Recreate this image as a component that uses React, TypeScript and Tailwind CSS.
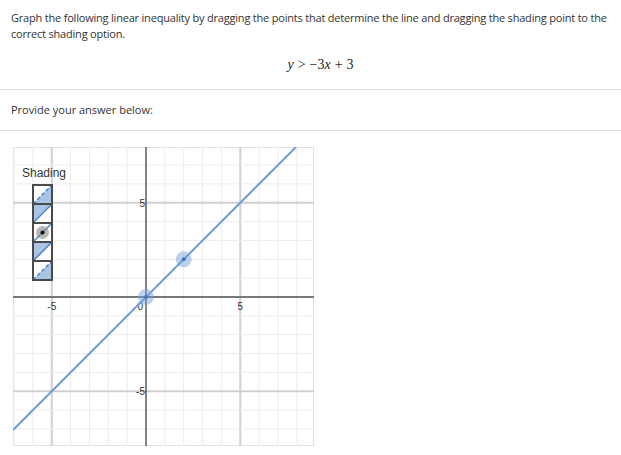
import React from "react";

const U = 18.85;
const OX = 133;
const OY = 150;
const W = 301;
const H = 299;

function Graph() {
  const vx: number[] = [];
  for (let i = -7; i <= 8; i++) vx.push(i);
  const hy: number[] = [];
  for (let i = -7; i <= 7; i++) hy.push(i);
  const p2x = OX + 2 * U;
  const p2y = OY - 2 * U;
  const bx = 20;
  const by = 38;
  const bs = 19;
  const boxes = [0, 1, 2, 3, 4];
  return (
    <svg width={W} height={H} viewBox={`0 0 ${W} ${H}`} className="block">
      <rect x={0.5} y={0.5} width={W - 1} height={H - 1} fill="white" stroke="#e2e2e2" />
      {vx.map((i) => {
        const x = OX + i * U;
        if (i === 0) return null;
        const major = i % 5 === 0;
        return (
          <line key={"v" + i} x1={x} y1={0} x2={x} y2={H} stroke={major ? "#d0d0d0" : "#ececec"} strokeWidth={major ? 2 : 1} />
        );
      })}
      {hy.map((i) => {
        const y = OY - i * U;
        if (i === 0) return null;
        const major = i % 5 === 0;
        return (
          <line key={"h" + i} x1={0} y1={y} x2={W} y2={y} stroke={major ? "#d0d0d0" : "#ececec"} strokeWidth={major ? 2 : 1} />
        );
      })}
      <line x1={0} y1={OY} x2={W} y2={OY} stroke="#777" strokeWidth={2} />
      <line x1={OX} y1={0} x2={OX} y2={H} stroke="#333" strokeWidth={1.2} />
      <g fontFamily="'Liberation Sans', Arial, sans-serif" fontSize={10} fill="#333">
        <text x={OX - 5 * U} y={OY + 13} textAnchor="middle">-5</text>
        <text x={OX - 3} y={OY + 13} textAnchor="end">0</text>
        <text x={OX + 5 * U} y={OY + 13} textAnchor="middle">5</text>
        <text x={OX - 1} y={OY - 5 * U + 4} textAnchor="end">5</text>
        <text x={OX - 1} y={OY + 5 * U + 4} textAnchor="end">-5</text>
      </g>
      <line x1={0} y1={283} x2={283} y2={0} stroke="#6e9fd6" strokeWidth={2} />
      <circle cx={OX} cy={OY} r={8} fill="#6e9fd6" fillOpacity={0.45} />
      <circle cx={OX} cy={OY} r={2} fill="#3f78c0" />
      <circle cx={p2x} cy={p2y} r={8} fill="#6e9fd6" fillOpacity={0.45} />
      <circle cx={p2x} cy={p2y} r={2} fill="#3f78c0" />
      <text x={9} y={30} fontFamily="'Liberation Sans', Arial, sans-serif" fontSize={12} fill="#333">Shading</text>
      {boxes.map((k) => {
        const y0 = by + k * bs;
        const x0 = bx;
        const x1 = bx + bs;
        const y1 = y0 + bs;
        const dashed = k === 0 || k === 4;
        const upper = k === 1 || k === 3;
        return (
          <g key={k}>
            <rect x={x0} y={y0} width={bs} height={bs} fill="white" />
            {k !== 2 && (
              <polygon
                points={upper ? `${x0},${y1} ${x1},${y0} ${x0},${y0}` : `${x0},${y1} ${x1},${y0} ${x1},${y1}`}
                fill="#a9c4e4"
              />
            )}
            <line x1={x0} y1={y1} x2={x1} y2={y0} stroke="#4a82c6" strokeWidth={1.5} strokeDasharray={dashed ? "4 2" : undefined} />
            <rect x={x0} y={y0} width={bs} height={bs} fill="none" stroke="#4a4a4a" strokeWidth={2} />
          </g>
        );
      })}
      <circle cx={bx + bs / 2} cy={by + 2 * bs + bs / 2} r={6.5} fill="#888" fillOpacity={0.6} />
      <circle cx={bx + bs / 2} cy={by + 2 * bs + bs / 2} r={2} fill="#000" />
    </svg>
  );
}

export default function App() {
  return (
    <div className="w-[621px] h-[455px] bg-white text-[#333] font-['Open_Sans'] overflow-hidden">
      <div className="px-[11px] pt-[10px] text-[11px] leading-[16px] tracking-[-0.2px]">
        Graph the following linear inequality by dragging the points that determine the line and dragging the shading point to the correct shading option.
      </div>
      <div className="h-[47px] flex items-start justify-center pt-[12px]">
        <span className="[font-family:'Liberation_Serif',serif] text-[14px] pl-[20px] text-[#222]">
          <i>y</i>
          <span className="px-[4px]">&gt;</span>
          <span>−3</span>
          <i>x</i>
          <span className="px-[4px]">+</span>
          <span>3</span>
        </span>
      </div>
      <div className="border-t border-[#dcdcdc]" />
      <div className="h-[40px] flex items-center px-[11px] text-[11px]">Provide your answer below:</div>
      <div className="border-t border-[#dcdcdc]" />
      <div className="pl-[13px] pt-[16px]">
        <Graph />
      </div>
    </div>
  );
}
